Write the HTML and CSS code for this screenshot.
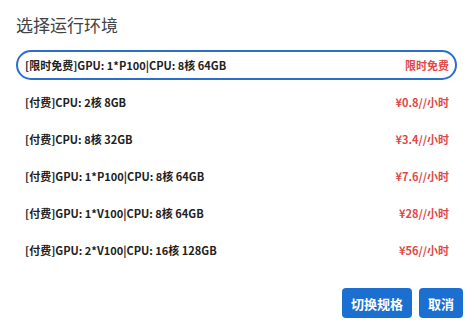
FILE: index.html
```html
<!doctype html>
<html>

<head>
	<meta charset="utf-8">
	<title>选择运行环境</title>
	<link rel="stylesheet" href="styles.css">
</head>

<body>
	<div class="dialog">
		<div class="dialog-title">选择运行环境</div>
		<ul class="env-list">
			<li class="env-item selected">
				<span class="env-name">[限时免费]GPU: 1*P100|CPU: 8核 64GB</span>
				<span class="env-price">限时免费</span>
			</li>
			<li class="env-item">
				<span class="env-name">[付费]CPU: 2核 8GB</span>
				<span class="env-price">¥0.8//小时</span>
			</li>
			<li class="env-item">
				<span class="env-name">[付费]CPU: 8核 32GB</span>
				<span class="env-price">¥3.4//小时</span>
			</li>
			<li class="env-item">
				<span class="env-name">[付费]GPU: 1*P100|CPU: 8核 64GB</span>
				<span class="env-price">¥7.6//小时</span>
			</li>
			<li class="env-item">
				<span class="env-name">[付费]GPU: 1*V100|CPU: 8核 64GB</span>
				<span class="env-price">¥28//小时</span>
			</li>
			<li class="env-item">
				<span class="env-name">[付费]GPU: 2*V100|CPU: 16核 128GB</span>
				<span class="env-price">¥56//小时</span>
			</li>
		</ul>
		<div class="dialog-footer">
			<button class="btn">切换规格</button>
			<button class="btn">取消</button>
		</div>
	</div>
</body>

</html>
```

FILE: styles.css
```css
body {
	margin: 0;
	background: #fff;
	font-family: "Noto Sans CJK SC", "Noto Sans", sans-serif;
}

.dialog {
	padding: 13px 17px 0 16px;
}

.dialog-title {
	font-size: 17px;
	line-height: 24px;
	color: #444;
	margin-bottom: 13px;
}

.env-list {
	list-style: none;
	margin: 0;
	padding: 0;
	display: flex;
	flex-direction: column;
	gap: 7px;
}

.env-item {
	display: flex;
	justify-content: space-between;
	align-items: center;
	height: 30px;
	box-sizing: border-box;
	padding: 0 6px 0 7px;
	border: 2px solid transparent;
	border-radius: 15px;
	font-size: 11px;
	font-weight: bold;
	color: #222;
}

.env-item.selected {
	border-color: #2a6fcc;
}

.env-price {
	color: #e04848;
}

.dialog-footer {
	display: flex;
	justify-content: flex-end;
	gap: 7px;
	margin-top: 23px;
	margin-right: -6px;
}

.btn {
	height: 30px;
	padding: 0 9px;
	border: none;
	border-radius: 4px;
	background: #1b6fd0;
	color: #fff;
	font-family: inherit;
	font-size: 13px;
	font-weight: bold;
}
```
